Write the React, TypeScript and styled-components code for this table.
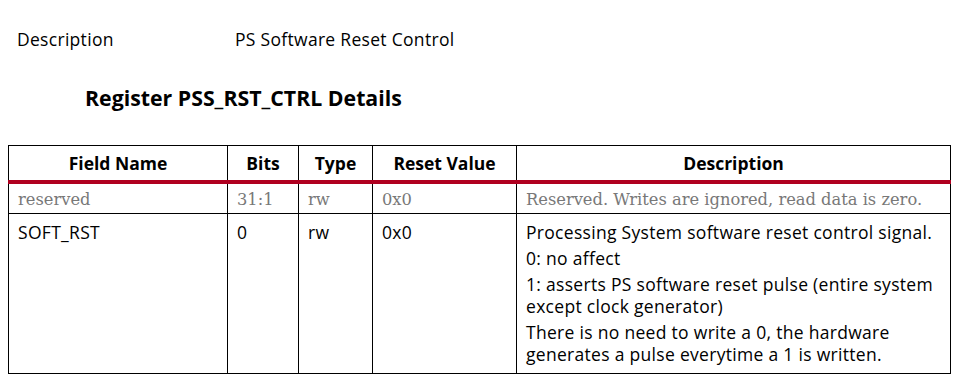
import React from 'react';
import styled, { createGlobalStyle } from 'styled-components';

const GlobalStyle = createGlobalStyle`
  body {
    margin: 0;
    background: #fff;
    font-family: "Open Sans", "Noto Sans", sans-serif;
    color: #000;
  }
`;

const Page = styled.div`
  width: 970px;
  height: 392px;
  padding-top: 27px;
  box-sizing: border-box;
`;

const InfoRow = styled.div`
  display: grid;
  grid-template-columns: 218px 1fr;
  padding-left: 17px;
  font-size: 17.5px;
  letter-spacing: 0.3px;
  line-height: 24px;
`;

const Heading = styled.h2`
  margin: 33px 0 0 85px;
  font-size: 21.3px;
  font-weight: 700;
  line-height: 28px;
`;

const Table = styled.table`
  margin: 33px 0 0 8px;
  width: 943px;
  border-collapse: collapse;
  table-layout: fixed;
  font-size: 17.5px;
  letter-spacing: 0.3px;
`;

const HeadCell = styled.th<{ $w?: number }>`
  box-sizing: border-box;
  width: ${p => (p.$w ? `${p.$w}px` : 'auto')};
  height: 35px;
  padding: 0 8px;
  border: 1px solid #000;
  border-bottom: 4px solid #b00020;
  font-weight: 700;
  letter-spacing: 0;
  text-align: center;
  vertical-align: top;
  line-height: 34px;
`;

const Cell = styled.td<{ $legacy?: boolean }>`
  padding: ${p => (p.$legacy ? '5px 8px 2px 9px' : '7px 8px 8px 9px')};
  border: 1px solid #000;
  vertical-align: top;
  text-align: left;
  line-height: 22px;
  color: ${p => (p.$legacy ? '#787878' : '#000')};
  font-family: ${p => (p.$legacy ? '"DejaVu Serif", serif' : 'inherit')};
  font-size: ${p => (p.$legacy ? '16.3px' : 'inherit')};
  letter-spacing: ${p => (p.$legacy ? '0' : 'inherit')};
`;

const Para = styled.p`
  margin: 0 0 4px 0;
  &:last-child {
    margin-bottom: 0;
  }
`;

const App: React.FC = () => {
  return (
    <Page>
      <GlobalStyle />
      <InfoRow>
        <span>Description</span>
        <span>PS Software Reset Control</span>
      </InfoRow>
      <Heading>Register PSS_RST_CTRL Details</Heading>
      <Table>
        <thead>
          <tr>
            <HeadCell $w={219}>Field Name</HeadCell>
            <HeadCell $w={71}>Bits</HeadCell>
            <HeadCell $w={74}>Type</HeadCell>
            <HeadCell $w={144}>Reset Value</HeadCell>
            <HeadCell>Description</HeadCell>
          </tr>
        </thead>
        <tbody>
          <tr>
            <Cell $legacy>reserved</Cell>
            <Cell $legacy>31:1</Cell>
            <Cell $legacy>rw</Cell>
            <Cell $legacy>0x0</Cell>
            <Cell $legacy>Reserved. Writes are ignored, read data is zero.</Cell>
          </tr>
          <tr>
            <Cell>SOFT_RST</Cell>
            <Cell>0</Cell>
            <Cell>rw</Cell>
            <Cell>0x0</Cell>
            <Cell>
              <Para>Processing System software reset control signal.</Para>
              <Para>0: no affect</Para>
              <Para>1: asserts PS software reset pulse (entire system except clock generator)</Para>
              <Para>There is no need to write a 0, the hardware generates a pulse everytime a 1 is written.</Para>
            </Cell>
          </tr>
        </tbody>
      </Table>
    </Page>
  );
};

export default App;
